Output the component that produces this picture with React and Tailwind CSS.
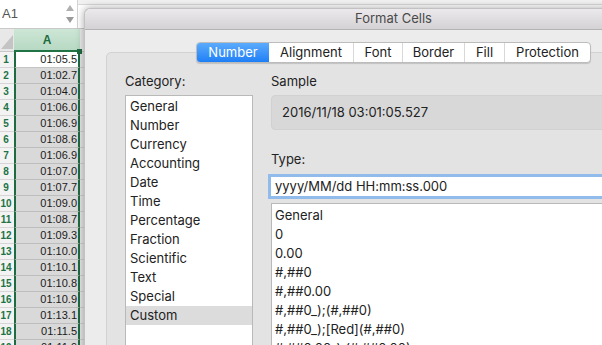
export default function App() {
  const times = [
    "01:05.5", "01:02.7", "01:04.0", "01:06.0", "01:06.9", "01:08.6", "01:06.9",
    "01:07.0", "01:07.7", "01:09.0", "01:08.7", "01:09.3", "01:10.0", "01:10.1",
    "01:10.8", "01:10.9", "01:13.1", "01:11.5", "01:11.9",
  ];
  const categories = [
    "General", "Number", "Currency", "Accounting", "Date", "Time", "Percentage",
    "Fraction", "Scientific", "Text", "Special", "Custom",
  ];
  const formats = [
    "General", "0", "0.00", "#,##0", "#,##0.00", "#,##0_);(#,##0)",
    "#,##0_);[Red](#,##0)", "#,##0.00_);(#,##0.00)",
  ];

  return (
    <div className="relative w-[602px] h-[345px] overflow-hidden bg-white font-['Liberation_Sans',Arial,sans-serif]">
      {/* Excel sheet */}
      <div className="flex flex-col">
        {/* formula bar */}
        <div className="flex h-[29px] border-b border-[#c9c9c9] bg-white">
          <div className="w-[62px] flex items-center pl-[2px] text-[13px] text-[#555]">A1</div>
          <div className="w-[15px] flex flex-col items-center justify-center gap-[6px]">
            <svg width="8" height="6" viewBox="0 0 8 6"><path d="M4 0 L8 6 L0 6 Z" fill="#b0b0b0" /></svg>
            <svg width="8" height="6" viewBox="0 0 8 6"><path d="M0 0 L8 0 L4 6 Z" fill="#9a9a9a" /></svg>
          </div>
          <div className="w-px bg-[#d4d4d4]" />
          <div className="flex-1 flex flex-col">
            <div className="h-[5px] bg-[#f2f2f2] border-b border-[#d9d9d9]" />
          </div>
        </div>
        {/* column header */}
        <div className="flex h-[23px]">
          <div className="w-[14px] bg-[#e8e8e8] border-b border-[#c8c8c8] flex items-end justify-end pb-[2px] pr-[1px]">
            <svg width="12" height="14" viewBox="0 0 12 14"><path d="M12 0 L12 14 L0 14 Z" fill="#c4c4c4" /></svg>
          </div>
          <div className="w-[66px] bg-linear-to-b from-[#cde6d6] to-[#b7d9c3] border-b-2 border-[#217346] flex items-center justify-center text-[12px] font-bold text-[#1d6b40]">
            A
          </div>
          <div className="flex-1 bg-[#ececec] border-b border-[#c8c8c8]" />
        </div>
        {/* rows */}
        {times.map((t, i) => (
          <div key={i} className="flex h-[16px]">
            <div className="w-[14px] bg-[#f3f3f3] border-b border-[#d6d6d6] flex items-center justify-center pr-[2px] text-[10px] font-bold text-[#217346] leading-none whitespace-nowrap">
              {i + 1}
            </div>
            <div
              className={
                i === 0
                  ? "w-[66px] bg-white border-x-2 border-x-[#1f6b41] border-b border-b-[#c4c4c4] flex items-center justify-end pr-[1px] text-[11px] text-[#1a1a1a] leading-none"
                  : "w-[66px] bg-[#d9d9d9] border-x-2 border-x-[#1f6b41] border-b border-b-[#bdbdbd] flex items-center justify-end pr-[1px] text-[11px] text-[#1a1a1a] leading-none"
              }
            >
              {t}
            </div>
            <div className="flex-1 bg-[#e6e6e6] border-b border-[#d0d0d0]" />
          </div>
        ))}
      </div>
      <div className="absolute left-[77px] top-[49px] w-[5px] h-[5px] bg-[#1f6b41]" />

      {/* Format Cells dialog */}
      <div className="absolute left-[84px] top-[8px] w-[618px] h-[380px] rounded-t-[6px] bg-[#ececec] border-l border-t border-[#c2c2c2] shadow-[0_0_8px_rgba(0,0,0,0.35)] font-['Inter',sans-serif] text-[#222]">
        <div className="h-[21px] rounded-t-[6px] bg-linear-to-b from-[#ebe9eb] to-[#d4d2d4] border-b border-[#b4b4b4] flex items-center justify-center text-[13px] text-[#4a4a4a]">
          Format Cells
        </div>
        <div className="pt-[12px]">
          <div className="relative z-10 flex justify-center">
            <div className="flex h-[21px] rounded-[4px] border border-[#bcbcbc] bg-white shadow-[0_1px_1px_rgba(0,0,0,0.15)] overflow-hidden text-[13px] text-[#222] leading-none">
              <div className="w-[72px] flex items-center justify-center bg-linear-to-b from-[#5babfc] to-[#1d7ff6] text-white">Number</div>
              <div className="w-[84px] flex items-center justify-center">Alignment</div>
              <div className="w-[49px] flex items-center justify-center border-l border-[#d8d8d8]">Font</div>
              <div className="w-[62px] flex items-center justify-center border-l border-[#d8d8d8]">Border</div>
              <div className="w-[40px] flex items-center justify-center border-l border-[#d8d8d8]">Fill</div>
              <div className="w-[86px] flex items-center justify-center border-l border-[#d8d8d8]">Protection</div>
            </div>
          </div>
          <div className="mx-[21px] -mt-[11px] h-[340px] rounded-[5px] bg-[#e3e3e3] border border-[#d2d2d2] pt-[20px] pl-[18px] flex gap-[18px] text-[13px]">
            {/* Category column */}
            <div className="w-[128px] flex flex-col">
              <div className="h-[16px] leading-[16px]">Category:</div>
              <div className="mt-[6px] bg-white border border-[#b9b9b9] pt-[1px] h-[300px]">
                {categories.map((c) => (
                  <div
                    key={c}
                    className={
                      c === "Custom"
                        ? "h-[19px] leading-[19px] pl-[4px] bg-[#dcdcdc]"
                        : "h-[19px] leading-[19px] pl-[4px]"
                    }
                  >
                    {c}
                  </div>
                ))}
              </div>
            </div>
            {/* Right column */}
            <div className="flex-1 flex flex-col">
              <div className="h-[16px] leading-[16px]">Sample</div>
              <div className="mt-[6px] h-[37px] rounded-[4px] bg-[#d8d8d8] border border-[#d1d1d1] flex items-center pl-[10px]">
                2016/11/18 03:01:05.527
              </div>
              <div className="mt-[21px] h-[16px] leading-[16px]">Type:</div>
              <div className="mt-[10px] h-[20px] bg-white ring-3 ring-[#90bbea] flex items-center pl-[4px]">
                yyyy/MM/dd HH:mm:ss.000
              </div>
              <div className="mt-[7px] bg-white border border-[#b9b9b9] pt-[2px] h-[200px]">
                {formats.map((f) => (
                  <div key={f} className="h-[19px] leading-[19px] pl-[3px]">
                    {f}
                  </div>
                ))}
              </div>
            </div>
          </div>
        </div>
      </div>
    </div>
  );
}
